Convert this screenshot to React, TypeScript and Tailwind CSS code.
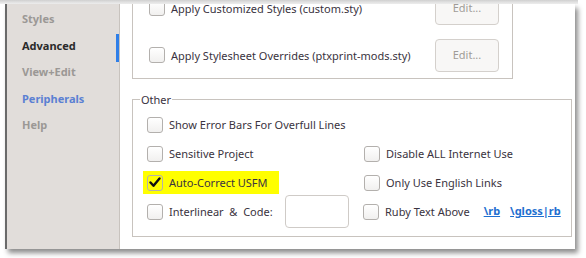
import React from "react";

const font = { fontFamily: '"Noto Sans", "Open Sans", sans-serif' };

function Box({ checked = false }: { checked?: boolean }) {
  return (
    <div
      className={`w-[16px] h-[16px] shrink-0 rounded-[3px] border border-[#b3b0ad] flex items-center justify-center ${
        checked ? "bg-transparent" : "bg-gradient-to-b from-white to-[#f1f0ef]"
      }`}
    >
      {checked && (
        <svg width="12" height="11" viewBox="0 0 12 11">
          <path d="M1.5 5.5 L4.5 8.8 L10.5 1.5" fill="none" stroke="#111" strokeWidth="2.4" strokeLinecap="round" strokeLinejoin="round" />
        </svg>
      )}
    </div>
  );
}

function Check({ label, checked = false }: { label: React.ReactNode; checked?: boolean }) {
  return (
    <div className="flex items-center gap-[6px]">
      <Box checked={checked} />
      <span className="text-[11px] text-[#3a3340] leading-none whitespace-pre">{label}</span>
    </div>
  );
}

function EditBtn() {
  return (
    <div className="w-[64px] h-[33px] rounded-[4px] border border-[#d4d0cc] bg-[#f8f7f6] flex items-center justify-center text-[11px] text-[#a09c98]">
      Edit...
    </div>
  );
}

export default function App() {
  return (
    <div className="w-[586px] h-[258px] bg-white relative overflow-hidden" style={font}>
      <div className="h-[4px] w-[578px] bg-gradient-to-b from-[#cfcfcf] to-[#f2f2f2]" />
      <div className="ml-[5px] w-[570px] h-[245px] flex bg-white border-l-2 border-[#6a6a6a] shadow-[3px_4px_5px_rgba(0,0,0,0.45)] overflow-hidden">
        {/* Sidebar */}
        <div className="w-[113px] shrink-0 bg-[#e1ddda] border-r border-[#c8c3be] flex flex-col pt-[2px] font-bold text-[11px]">
          <div className="h-[26.5px] flex items-center pl-[15px] text-[#9b9895]">Styles</div>
          <div className="h-[26.5px] flex items-center justify-between pl-[15px] text-[#2a2a2a]">
            <span>Advanced</span>
            <span className="w-[3px] h-[28px] mt-[5px] bg-[#2f7fe8]" />
          </div>
          <div className="h-[26.5px] flex items-center pl-[15px] text-[#9b9895]">View+Edit</div>
          <div className="h-[26.5px] flex items-center pl-[15px] text-[#5b80d3]">Peripherals</div>
          <div className="h-[26.5px] flex items-center pl-[15px] text-[#9b9895]">Help</div>
        </div>
        {/* Content */}
        <div className="flex-1 pl-[12px] flex flex-col">
          <div className="-mt-[13px] w-[381px] h-[88px] border border-[#c8c3be] flex flex-col pl-[16px] pr-[13px]">
            <div className="h-[32px] flex items-center justify-between">
              <Check label="Apply Customized Styles (custom.sty)" />
              <EditBtn />
            </div>
            <div className="h-[54px] pt-[8px] flex items-center justify-between">
              <Check label="Apply Stylesheet Overrides (ptxprint-mods.sty)" />
              <EditBtn />
            </div>
          </div>
          <div className="mt-[20px] w-[440px] h-[138px] border border-[#c8c3be] relative">
            <span className="absolute -top-[8px] left-[7px] bg-white px-[1px] text-[11px] leading-[16px] text-[#3a3340]">Other</span>
            <div className="grid grid-cols-[217px_1fr] auto-rows-[29px] pl-[14px] pt-[10px]">
              <div className="flex items-center">
                <Check label="Show Error Bars For Overfull Lines" />
              </div>
              <div />
              <div className="flex items-center">
                <Check label="Sensitive Project" />
              </div>
              <div className="flex items-center">
                <Check label="Disable ALL Internet Use" />
              </div>
              <div className="flex items-center">
                <div className="-ml-[4px] pl-[4px] w-[136px] h-[23px] bg-[#ffff00] flex items-center">
                  <Check label="Auto-Correct USFM" checked />
                </div>
              </div>
              <div className="flex items-center">
                <Check label="Only Use English Links" />
              </div>
              <div className="flex items-center gap-[12px]">
                <Check label="Interlinear  &  Code:" />
                <div className="w-[64px] h-[33px] rounded-[4px] border border-[#cfcbc7] bg-white" />
              </div>
              <div className="flex items-center -ml-[1px]">
                <Check label="Ruby Text Above" />
                <span className="ml-[14px] text-[11px] font-bold underline text-[#1f6fd0]">\rb</span>
                <span className="ml-[10px] text-[11px] font-bold underline text-[#1f6fd0]">\gloss|rb</span>
              </div>
            </div>
          </div>
        </div>
      </div>
    </div>
  );
}
